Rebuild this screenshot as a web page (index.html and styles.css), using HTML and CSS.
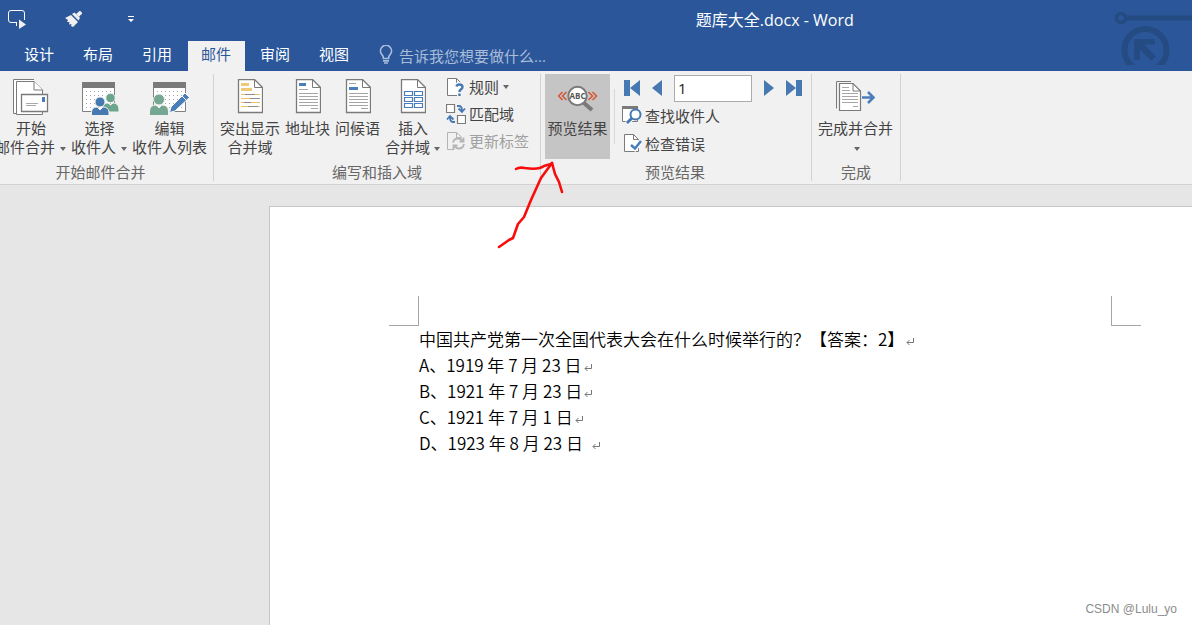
FILE: index.html
```
<!DOCTYPE html>
<html lang="zh-CN">
<head>
    <meta charset="UTF-8">
    <meta name="viewport" content="width=device-width, initial-scale=1.0">
    <title>题库大全.docx - Word</title>
    <link rel="stylesheet" href="styles.css">
</head>
<body>
    <header class="header">
        <svg class="header-art" width="152" height="65" viewBox="0 0 152 65" fill="none" stroke="#244b82">
            <circle cx="81" cy="18" r="4.5" stroke-width="3.5"/>
            <path d="M86 18H152" stroke-width="5"/>
            <circle cx="105.500" cy="50" r="21" stroke-width="6"/>
            <path d="M94 39H115V44.500H104L116 56.500L111.500 61L100 49.500V60H94Z" fill="#244b82" stroke="none"/>
        </svg>
        <div class="title-bar">
            <div class="quick-access">
                <button class="quick-btn" aria-label="触摸模式">
                    <svg width="20" height="20" viewBox="0 0 20 20">
                        <path d="M9.500 13.500H4Q1.500 13.500 1.500 11V4Q1.500 1.500 4 1.500H15Q17.500 1.500 17.500 4V11M9.500 13V17" fill="none" stroke="#fff"/>
                        <path d="M12 10.500L19 15.500L12 20Z" fill="#f0f0f0"/>
                    </svg>
                </button>
                <button class="quick-btn" aria-label="格式刷">
                    <svg width="20" height="20" viewBox="0 0 20 20" fill="#f0f0f0">
                        <path d="M1 9L7 6L14 13L9 18L7 17L7.500 15L5 15.500L5.500 13L3 13L4 11Z"/>
                        <path d="M8 5L10.500 3.500L16 9L14.500 11.500Z"/>
                        <path d="M12 5L14.500 3Q15.500 1 17.500 3Q19 5 16.500 6L15 8Z"/>
                    </svg>
                </button>
                <button class="quick-btn" aria-label="自定义快速访问工具栏">
                    <svg width="8" height="8" viewBox="0 0 8 8" fill="#fff"><path d="M1 1H7V2H1ZM1 4H7L4 7Z"/></svg>
                </button>
            </div>
            <h1 class="title">题库大全.docx - Word</h1>
        </div>
        <nav class="tabs">
            <button class="tab">设计</button>
            <button class="tab">布局</button>
            <button class="tab">引用</button>
            <button class="tab active">邮件</button>
            <button class="tab">审阅</button>
            <button class="tab">视图</button>
            <button class="tell-me">
                <svg width="14" height="20" viewBox="0 0 14 20" fill="none" stroke="#a9bcd9" stroke-width="1.700">
                    <path d="M4.500 13.500Q4.500 11 2.700 9.300A5.500 5.500 0 1 1 11.300 9.300Q9.500 11 9.500 13.500ZM4 15.800H10M5 18H9"/>
                </svg>
                告诉我您想要做什么...
            </button>
        </nav>
    </header>

    <section class="ribbon">
        <div class="group group-start">
            <div class="group-body">
                <button class="big-btn">
                    <svg width="36" height="36" viewBox="0 0 36 36" fill="#fff" stroke="#7a7a7a">
                        <path d="M21 .5H.5V34.500H4"/>
                        <path d="M3.500 2.500H21L29.500 11V35.500H3.500Z"/>
                        <path d="M21 2.500V11H29.500"/>
                        <path d="M8.500 15.500H34.500V32.500H8.500Z" stroke-width="1.300"/>
                        <path d="M29 18H32V23H29Z" fill="#4a7ebb" stroke="none"/>
                        <path d="M13 24.500H25M13 26.500H23" stroke="#aaa"/>
                    </svg>
                    <span>开始</span>
                    <span>邮件合并<i class="caret"></i></span>
                </button>
                <button class="big-btn">
                    <svg width="38" height="36" viewBox="0 0 38 36">
                        <path d="M1.500 3.500H33.500V32.500H1.500Z" fill="#fff" stroke="#808080"/>
                        <path d="M1 3H34V9H1Z" fill="#7a7a7a"/>
                        <path d="M5 12.500H32M5 16.500H32M5 20.500H32M5 24.500H32M5 28.500H32" stroke="#a6a6a6" stroke-dasharray="1 3"/>
                        <g fill="#6ba58c" stroke="#f0f0f0"><circle cx="29.500" cy="19" r="4.700"/><path d="M21.500 33V29Q22 24 27 24L29.500 26L32 24Q37.500 24 38 30V33Z"/></g>
                        <g fill="#4678b2" stroke="#f0f0f0"><circle cx="19" cy="23" r="5"/><path d="M10.500 37V33Q11 28 16 28L19 31L22 28Q27.500 28 28 33V37Z"/></g>
                    </svg>
                    <span>选择</span>
                    <span>收件人<i class="caret"></i></span>
                </button>
                <button class="big-btn">
                    <svg width="40" height="36" viewBox="0 0 40 36">
                        <path d="M3.500 3.500H35.500V32.500H3.500Z" fill="#fff" stroke="#808080"/>
                        <path d="M3 3H36V9H3Z" fill="#7a7a7a"/>
                        <path d="M7 12.500H34M7 16.500H34M7 20.500H34M7 24.500H34M7 28.500H34" stroke="#a6a6a6" stroke-dasharray="1 3"/>
                        <g fill="#75a892" stroke="#f0f0f0"><circle cx="9" cy="20.500" r="5.500"/><path d="M-.5 37V32Q0 26 6 26L9 29L12 26Q18 26 18.500 32V37Z"/></g>
                        <path d="M19.500 33.500L21 28L35 14L39.500 18.500L25 32Z" fill="#4a7ebb" stroke="#fff"/>
                        <path d="M32 17L36.500 21.500" stroke="#fff"/>
                    </svg>
                    <span>编辑</span>
                    <span>收件人列表</span>
                </button>
            </div>
            <div class="group-name">开始邮件合并</div>
        </div>

        <div class="group group-write">
            <div class="group-body">
                <button class="big-btn">
                    <svg width="26" height="36" viewBox="0 0 26 36">
                        <path d="M1.500 .5H17.500L25.500 8.500V33.500H1.500Z" fill="#fff" stroke="#7a7a7a" stroke-width="1.300"/>
                        <path d="M17.500 .5V8.500H25.500" fill="none" stroke="#7a7a7a"/>
                        <path d="M4 4H12V7H4ZM4 9H15V12H4Z" fill="#efc979"/>
                        <path d="M4 15.500H23M4 19.500H23M4 23.500H23M4 27.500H23" stroke="#efc060"/>
                        <path d="M8 15.500H18M13 19.500H23M7 23.500H14M11 27.500H21" stroke="#8c8c8c"/>
                    </svg>
                    <span>突出显示</span>
                    <span>合并域</span>
                </button>
                <button class="big-btn">
                    <svg width="26" height="36" viewBox="0 0 26 36">
                        <path d="M1.500 .5H17.500L25.500 8.500V33.500H1.500Z" fill="#fff" stroke="#7a7a7a" stroke-width="1.300"/>
                        <path d="M17.500 .5V8.500H25.500" fill="none" stroke="#7a7a7a"/>
                        <path d="M4 4H11V7H4Z" fill="#4a7ebb"/>
                        <path d="M4 10.500H13M4 14.500H23M4 17.500H23M4 20.500H23M4 23.500H23M4 26.500H23M16 29.500H23" stroke="#a6a6a6"/>
                    </svg>
                    <span>地址块</span>
                </button>
                <button class="big-btn">
                    <svg width="26" height="36" viewBox="0 0 26 36">
                        <path d="M1.500 .5H17.500L25.500 8.500V33.500H1.500Z" fill="#fff" stroke="#7a7a7a" stroke-width="1.300"/>
                        <path d="M17.500 .5V8.500H25.500" fill="none" stroke="#7a7a7a"/>
                        <path d="M4 8H13V11H4Z" fill="#4a7ebb"/>
                        <path d="M4 4.500H11M4 14.500H23M4 17.500H23M4 20.500H23M4 23.500H23M4 26.500H23M16 29.500H23" stroke="#a6a6a6"/>
                    </svg>
                    <span>问候语</span>
                </button>
                <button class="big-btn">
                    <svg width="26" height="36" viewBox="0 0 26 36">
                        <path d="M1.500 .5H17.500L25.500 8.500V33.500H1.500Z" fill="#fff" stroke="#7a7a7a" stroke-width="1.300"/>
                        <path d="M17.500 .5V8.500H25.500" fill="none" stroke="#7a7a7a"/>
                        <path d="M4.500 12.500H12.500V16.500H4.500ZM14.500 12.500H22.500V16.500H14.500ZM4.500 18.500H12.500V22.500H4.500ZM14.500 18.500H22.500V22.500H14.500ZM4.500 24.500H12.500V28.500H4.500ZM14.500 24.500H22.500V28.500H14.500Z" fill="#fff" stroke="#4a7ebb" stroke-width="1.200"/>
                    </svg>
                    <span>插入</span>
                    <span>合并域<i class="caret"></i></span>
                </button>
                <div class="stack">
                    <button class="small-btn">
                        <svg width="20" height="20" viewBox="0 0 20 20">
                            <path d="M1.500 1.500H10.500L15.500 6.500V18.500H1.500Z" fill="#fff" stroke="#7a7a7a"/>
                            <path d="M10.500 1.500V6.500H15.500" fill="none" stroke="#7a7a7a"/>
                            <path d="M10.500 9.500Q11 7.500 13.500 7.500Q16.500 7.500 16.500 10Q16.500 11.500 14.800 12.500Q13.500 13.500 13.500 15V19" fill="none" stroke="#f8f8f8" stroke-width="5"/>
                            <path d="M10.500 9.500Q11 7.500 13.500 7.500Q16.500 7.500 16.500 10Q16.500 11.500 14.800 12.500Q13.500 13.500 13.500 15M13.500 16.500V19" fill="none" stroke="#4678b2" stroke-width="2.400"/>
                        </svg>
                        规则<i class="caret"></i>
                    </button>
                    <button class="small-btn">
                        <svg width="20" height="20" viewBox="0 0 20 20" fill="none">
                            <path d="M.5 .5H8.500V8.500H.5ZM11.500 11.500H19.500V19.500H11.500Z" fill="#fff" stroke="#7a7a7a" stroke-width="1.200"/>
                            <path d="M11 2H13Q16 2 16 7M12.500 4.500L16 8L19 4.500M9 18H7Q4 18 4 13M1 15.500L4 12L7.500 15.500" stroke="#4678b2" stroke-width="1.800"/>
                        </svg>
                        匹配域
                    </button>
                    <button class="small-btn" disabled>
                        <svg width="20" height="20" viewBox="0 0 20 20" fill="none">
                            <path d="M15.500 6.500V6L10.500 1.500H1.500V18.500H7M10.500 1.500V6.500H15.500" stroke="#b8b0b8"/>
                            <path d="M7 11.500Q8 7.500 12 7.500Q15 7.500 17 10M17.500 6.500V10.500H13.500M18 13Q17 17.500 13 17.500Q10 17.500 8 15M7.500 19V14.500H11.500" stroke="#b5b5b5" stroke-width="1.800"/>
                        </svg>
                        更新标签
                    </button>
                </div>
            </div>
            <div class="group-name">编写和插入域</div>
        </div>

        <div class="group group-preview">
            <div class="group-body">
                <button class="big-btn pressed" aria-pressed="true">
                    <svg width="40" height="36" viewBox="0 0 40 36" fill="none">
                        <path d="M4.500 13L.5 17L4.500 21M8.500 13L4.500 17L8.500 21M30.500 13L34.500 17L30.500 21M34.500 13L38.500 17L34.500 21" stroke="#d65532" stroke-width="1.500"/>
                        <path d="M26 24L34 31" stroke="#7a7a7a" stroke-width="4"/>
                        <circle cx="19.500" cy="17" r="9.200" fill="#fff" stroke="#7a7a7a" stroke-width="2"/>
                        <text class="abc" x="19.500" y="20" text-anchor="middle">ABC</text>
                    </svg>
                    <span>预览结果</span>
                </button>
                <div class="stack preview-stack">
                    <div class="record-nav">
                        <button aria-label="首记录"><svg width="16" height="16" viewBox="0 0 16 16"><path d="M0 0H6V8L16 0V16L6 8V16H0Z" fill="#4678b2"/></svg></button>
                        <button aria-label="上一记录"><svg width="10" height="16" viewBox="0 0 10 16"><path d="M10 0V16L0 8Z" fill="#4678b2"/></svg></button>
                        <input type="text" value="1" aria-label="记录">
                        <button aria-label="下一记录"><svg width="10" height="16" viewBox="0 0 10 16"><path d="M0 0V16L10 8Z" fill="#4678b2"/></svg></button>
                        <button aria-label="尾记录"><svg width="16" height="16" viewBox="0 0 16 16"><path d="M16 0H10V8L0 0V16L10 8V16H16Z" fill="#4678b2"/></svg></button>
                    </div>
                    <button class="small-btn">
                        <svg width="20" height="20" viewBox="0 0 20 20" fill="none">
                            <path d="M.5 1.500H15.500V16.500H.5Z" fill="#fff" stroke="#7a7a7a"/>
                            <path d="M0 1H16V4H0Z" fill="#7a7a7a"/>
                            <path d="M10 13L5 18" stroke="#fff" stroke-width="5"/>
                            <circle cx="13.500" cy="9.500" r="5" fill="#fff" stroke="#4678b2" stroke-width="2"/>
                            <path d="M10 13L5 18" stroke="#4678b2" stroke-width="3"/>
                        </svg>
                        查找收件人
                    </button>
                    <button class="small-btn">
                        <svg width="20" height="20" viewBox="0 0 20 20" fill="none">
                            <path d="M2.500 1.500H11.500L16.500 6.500V18.500H2.500Z" fill="#fff" stroke="#7a7a7a"/>
                            <path d="M11.500 1.500V6.500H16.500" stroke="#7a7a7a"/>
                            <path d="M9 12L13 15.500L19 8" stroke="#fff" stroke-width="5"/>
                            <path d="M9 12L13 15.500L19 8" stroke="#4a7ebb" stroke-width="2.500"/>
                        </svg>
                        检查错误
                    </button>
                </div>
            </div>
            <div class="group-name">预览结果</div>
        </div>

        <div class="group group-finish">
            <div class="group-body">
                <button class="big-btn">
                    <svg width="40" height="36" viewBox="0 0 40 36" fill="none">
                        <path d="M15 2.500H.5V29.500" stroke="#7a7a7a"/>
                        <path d="M3.500 4.500H17L24.500 12V31.500H3.500Z" fill="#fff" stroke="#7a7a7a" stroke-width="1.200"/>
                        <path d="M17 4.500V12H24.500" stroke="#7a7a7a"/>
                        <path d="M6 8.500H13M6 11.500H14M6 14.500H22M6 17.500H22M6 20.500H22M6 23.500H22M17 27.500H22" stroke="#a6a6a6"/>
                        <path d="M26 18.500H37M32 13L37.500 18.500L32 24" stroke="#4a7ebb" stroke-width="2.500"/>
                    </svg>
                    <span>完成并合并</span>
                    <span><i class="caret"></i></span>
                </button>
            </div>
            <div class="group-name">完成</div>
        </div>
    </section>

    <main class="workspace">
        <article class="page">
            <div class="crop-marks"><i class="crop-left"></i><i class="crop-right"></i></div>
            <div class="page-text">
                <p>中国共产党第一次全国代表大会在什么时候举行的？【答案：2】<svg class="mark" viewBox="0 0 8 8"><use href="#return"/></svg></p>
                <p>A、1919 年 7 月 23 日<svg class="mark" viewBox="0 0 8 8"><use href="#return"/></svg></p>
                <p>B、1921 年 7 月 23 日<svg class="mark" viewBox="0 0 8 8"><use href="#return"/></svg></p>
                <p>C、1921 年 7 月 1 日<svg class="mark" viewBox="0 0 8 8"><use href="#return"/></svg></p>
                <p>D、1923 年 8 月 23 日 &nbsp;<svg class="mark" viewBox="0 0 8 8"><use href="#return"/></svg></p>
            </div>
        </article>
    </main>

    <svg class="symbols" width="0" height="0">
        <symbol id="return" viewBox="0 0 8 8"><path d="M7.500 0V4.500H1M3.500 2L1 4.500L3.500 7" fill="none" stroke="#777"/></symbol>
    </svg>

    <!-- hand-drawn arrow pointing at the preview button -->
    <svg class="red-arrow" width="70" height="94" viewBox="0 0 70 94" fill="none" stroke="#f80c0c" stroke-width="2.600" stroke-linecap="round" stroke-linejoin="round">
        <path d="M4 91L14 84L18 82L23 68L29 61L36 44L46 22L57 7"/>
        <path d="M21 13Q24 11 30 12Q44 14 49 10L56 8L57 7L60 18L64 26L67 36"/>
    </svg>
    <div class="watermark">CSDN @Lulu_yo</div>
</body>
</html>
```

FILE: styles.css
```
* {
    margin: 0;
    padding: 0;
    box-sizing: border-box;
}

body {
    min-height: 100vh;
    display: flex;
    flex-direction: column;
    position: relative;
    overflow: hidden;
    background: #e6e6e6;
    color: #444;
    font-family: "Open Sans", "Noto Sans CJK SC", sans-serif;
    font-size: 15px;
}

button {
    background: none;
    border: none;
    color: inherit;
    font: inherit;
    white-space: nowrap;
}

svg {
    display: block;
    flex-shrink: 0;
}

/* Header */
.header {
    position: relative;
    background: #2b579a;
    color: #fff;
}

.header-art {
    position: absolute;
    top: 0;
    right: 0;
}

.title-bar {
    display: flex;
    align-items: center;
    height: 41px;
    padding-bottom: 4px;
}

.quick-access {
    flex: 0 0 30%;
    display: flex;
    align-items: center;
    gap: 37px;
    padding-left: 7px;
}

.quick-btn {
    min-width: 20px;
}

.quick-btn svg {
    margin: 0 auto;
}

.title {
    flex: 1;
    text-align: center;
    font-size: 16px;
    font-weight: 400;
}

.tabs {
    display: flex;
    gap: 2px;
    height: 30px;
    padding-left: 11px;
}

.tab {
    width: 57px;
    padding: 0 1px 5px 0;
}

.tab.active {
    background: #f1f1f1;
    color: #2b579a;
}

.tell-me {
    display: flex;
    align-items: center;
    gap: 6px;
    margin-left: 14px;
    padding-bottom: 2px;
    color: #a9bcd9;
}

/* Ribbon */
.ribbon {
    display: flex;
    padding-top: 3px;
    height: 114px;
    background: #f1f1f1;
    border-bottom: 1px solid #d2d2d2;
}

.group {
    flex-shrink: 0;
    height: 107px;
    border-right: 1px solid #d2d2d2;
}

.group-body {
    display: flex;
    height: 85px;
}

.group-name {
    padding-top: 3px;
    line-height: 20px;
    text-align: center;
    color: #666;
}

.group-start {
    width: 214px;
}

.group-start .group-body {
    margin-left: -5px;
    gap: 4px;
}

.group-start .group-name {
    padding-right: 12px;
}

.group-write {
    width: 327px;
    padding-left: 6px;
}

.group-write .group-body {
    gap: 5px;
}

.group-write .group-name,
.group-preview .group-name {
    padding-right: 6px;
}

.group-preview {
    width: 271px;
    padding-left: 4px;
}

.group-finish {
    width: 89px;
    padding-left: 6px;
    padding-right: 6px;
}

.big-btn {
    display: flex;
    flex-direction: column;
    align-items: center;
    padding-top: 5px;
    line-height: 19px;
}

.big-btn svg {
    margin-bottom: 4px;
}

.big-btn.pressed {
    width: 65px;
    background: #c5c5c5;
}

.abc {
    font: 700 8px "Open Sans", sans-serif;
    fill: #555;
}

.caret {
    display: inline-block;
    margin: 0 1px 0 4px;
    border: 3px solid transparent;
    border-top: 4px solid #666;
    border-bottom: none;
    vertical-align: 2px;
}

.stack {
    display: flex;
    flex-direction: column;
}

.small-btn {
    display: flex;
    align-items: center;
    gap: 3px;
    height: 27px;
    padding-bottom: 2px;
}

.small-btn .caret {
    margin-left: 1px;
}

.small-btn:disabled {
    color: #a0a0a0;
}

.group-start .caret {
    margin-left: 5px;
}

.preview-stack {
    position: relative;
    padding-left: 12px;
}

.preview-stack::before {
    content: "";
    position: absolute;
    left: 4px;
    top: 15px;
    height: 55px;
    border-left: 1px solid #d8d8d8;
}

.preview-stack .small-btn,
.record-nav {
    height: 28px;
}

.record-nav {
    display: flex;
    align-items: center;
    gap: 12px;
    padding-left: 2px;
}

.record-nav input {
    width: 78px;
    height: 27px;
    padding: 0 3px;
    border: 1px solid #ababab;
    background: #fff;
    font: inherit;
    color: #222;
}

/* Document */
.workspace {
    flex: 1;
    display: flex;
    padding: 21px 0 0 269px;
}

.page {
    flex: 1;
    padding-top: 89px;
    background: #fff;
    border: 1px solid #c6c6c6;
    border-width: 1px 0 0 1px;
}

.crop-marks {
    display: flex;
    justify-content: space-between;
    padding: 0 51px 0 119px;
}

.crop-left,
.crop-right {
    width: 30px;
    height: 30px;
    border-bottom: 1px solid #a6a6a6;
}

.crop-left {
    border-right: 1px solid #a6a6a6;
}

.crop-right {
    border-left: 1px solid #a6a6a6;
}

.page-text {
    padding-left: 149px;
    color: #000;
    font-family: "Noto Sans CJK SC", sans-serif;
    font-size: 17px;
    font-weight: 350;
    line-height: 26px;
    text-spacing-trim: space-all;
}

.mark {
    display: inline-block;
    width: 8px;
    height: 8px;
    margin-left: 2px;
}

.symbols {
    position: absolute;
}

.red-arrow {
    position: absolute;
    left: 495px;
    top: 156px;
}

.watermark {
    position: absolute;
    right: 15px;
    bottom: 9px;
    color: #8c8c8c;
    font: 12px "Liberation Sans", sans-serif;
}
```
